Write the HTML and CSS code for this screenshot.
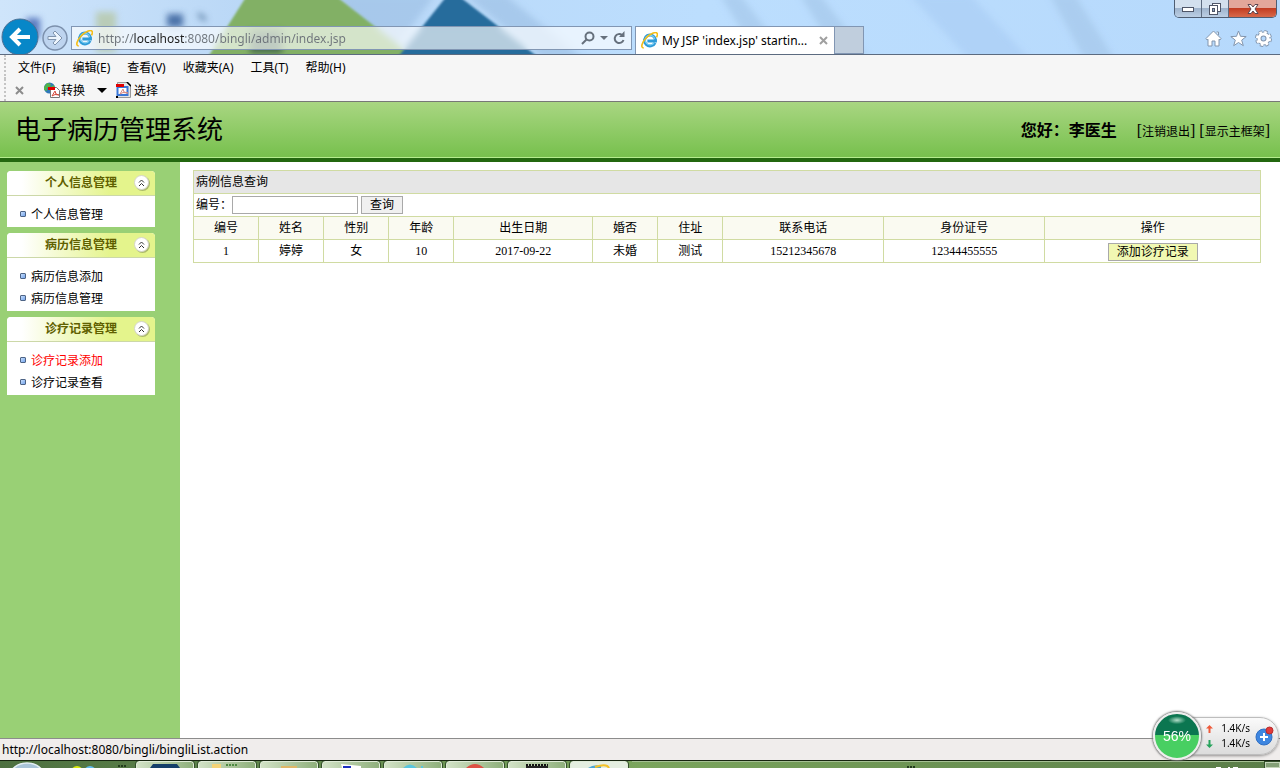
FILE: index.html
```
<!DOCTYPE html>
<html lang="zh-CN">

<head>
    <meta charset="utf-8">
    <title>My JSP 'index.jsp' starting page</title>
    <link rel="stylesheet" href="styles.css">
</head>

<body>
    <svg class="symbols" aria-hidden="true">
        <symbol id="ie" viewBox="0 0 16 16">
            <path d="M13.2 10.2a5.2 5.2 0 1 1 .4-3.2v1.4H6" fill="none" stroke="#2f9bd8" stroke-width="2.8" />
            <path d="M12.5 9.8a4.6 4.6 0 1 1 .5-3" fill="none" stroke="#7fd0f4" stroke-width="1" />
            <path d="M2.6 15C-.8 15 1 9.600 4.800 5.700 8.600 1.800 14-.8 15.200 1.300c.5 1 .1 2.400-.6 3.700" fill="none" stroke="#f5bd16" stroke-width="1.500" />
        </symbol>
        <symbol id="up" viewBox="0 0 18 18">
            <circle cx="9.500" cy="9.500" r="7.500" fill="#7d8a50" opacity=".55" />
            <circle cx="8.500" cy="8.500" r="7" fill="#fff" stroke="#d5d5c8" />
            <path d="M6 8.500l2.500-2.500 2.500 2.500M6 12l2.500-2.500 2.500 2.500" fill="none" stroke="#333" />
        </symbol>
    </svg>

    <div class="glass">
        <svg class="wallpaper" viewBox="0 0 1280 54" preserveAspectRatio="xMinYMin slice" aria-hidden="true">
            <defs>
                <filter id="soft" x="-20%" y="-50%" width="140%" height="200%">
                    <feGaussianBlur stdDeviation="3" />
                </filter>
                <filter id="edge">
                    <feGaussianBlur stdDeviation="1" />
                </filter>
                <linearGradient id="sky">
                    <stop offset="0" stop-color="#cfe5fb" />
                    <stop offset=".2" stop-color="#b9d7f6" />
                    <stop offset=".55" stop-color="#bcdefe" />
                    <stop offset="1" stop-color="#b6d9fc" />
                </linearGradient>
            </defs>
            <rect width="1280" height="54" fill="url(#sky)" />
            <g filter="url(#soft)">
                <path d="M720-5h20l50 65h-30zM800-5h20l50 65h-30zM1050-5h25l40 65h-30z" fill="#a5c8ea" opacity=".7" />
                <path d="M910-5h60l60 65h-60z" fill="#a8cbf4" opacity=".6" />
                <path d="M335-5h100l-45 60zM465-5l80 65h40l-80-65z" fill="#94b8de" opacity=".5" />
                <rect x="26" y="18" width="14" height="20" fill="#5c7bc0" />
                <rect x="96" y="12" width="20" height="40" fill="#b9ccb8" />
                <rect x="167" y="14" width="16" height="13" fill="#4c72a8" />
                <path d="M198 12l8 5v5l-8-5z" fill="#6789ad" />
            </g>
            <path d="M246-3h91l77 60H208z" fill="#82b065" filter="url(#edge)" />
            <path d="M446-3h14l78 60H398z" fill="#276c9c" filter="url(#edge)" />
            <rect x="250" y="31" width="32" height="22" fill="#44684e" filter="url(#soft)" />
        </svg>

        <div class="window-buttons">
            <button class="win" aria-label="最小化"><svg width="14" height="8" viewBox="0 0 14 8"><rect x="1.500" y="2.500" width="11" height="4" fill="#fff" stroke="#4f5668" /></svg></button>
            <button class="win" aria-label="还原"><svg width="14" height="14" viewBox="0 0 14 14" fill="#fff" stroke="#4f5668"><rect x="4.500" y="1.500" width="8" height="8" /><rect x="1.500" y="3.500" width="8" height="9" /><rect x="4.500" y="6.500" width="2" height="3" fill="#8fa5c0" /></svg></button>
            <button class="win win-close" aria-label="关闭"><svg width="14" height="12" viewBox="0 0 14 12"><path d="M2 1.500h3l2 2.500 2-2.500h3L9 6l3 4.500H9L7 8l-2 2.500H2L5 6z" fill="#fff" stroke="#5b4650" /></svg></button>
        </div>

        <div class="nav-row">
            <button class="back" aria-label="后退"><svg width="38" height="38" viewBox="0 0 38 38"><circle cx="19" cy="19" r="18" fill="#0787c8" stroke="#4c6e92" /><path d="M29 19H11M19 11l-8 8 8 8" fill="none" stroke="#fff" stroke-width="4" /></svg></button>
            <button class="forward" aria-label="前进"><svg width="26" height="26" viewBox="0 0 26 26"><circle cx="13" cy="13" r="12" fill="#b6cbe8" fill-opacity=".6" stroke="#7c90ac" stroke-width="1.500" /><path d="M6 11.500h8l-3-3.500 2-2 7 7-7 7-2-2 3-3.500H6z" fill="#edf5fd" stroke="#7f93ad" /></svg></button>
            <div class="address">
                <svg width="17" height="17"><use href="#ie" /></svg>
                <input class="url" type="text" aria-label="地址" value="http://localhost:8080/bingli/admin/index.jsp">
                <button aria-label="搜索"><svg width="14" height="14" viewBox="0 0 14 14" fill="none" stroke="#66707c" stroke-width="2"><circle cx="8.500" cy="5.500" r="4" /><path d="M5.500 8.500L1 13" /></svg></button>
                <button aria-label="下拉"><svg width="8" height="5" viewBox="0 0 8 5"><path d="M0 0h8L4 4z" fill="#66707c" /></svg></button>
                <button aria-label="刷新"><svg width="13" height="14" viewBox="0 0 13 14"><path d="M10.500 9a4.500 4.500 0 1 1-1.500-5" fill="none" stroke="#66707c" stroke-width="2" /><path d="M6 6h5.500V0z" fill="#66707c" /></svg></button>
            </div>
            <div class="tab">
                <svg width="17" height="17"><use href="#ie" /></svg>
                <span class="tab-title">My JSP 'index.jsp' startin...</span>
                <button aria-label="关闭标签"><svg width="9" height="9" viewBox="0 0 9 9"><path d="M1 1l7 7M8 1L1 8" stroke="#a0a0a0" stroke-width="2" /></svg></button>
            </div>
            <button class="new-tab" aria-label="新选项卡"></button>
            <div class="tools">
                <button aria-label="主页"><svg width="17" height="17" viewBox="0 0 17 17"><path d="M8.500 1L16 8.500l-1 1.500-1-.8V16h-4v-5H7v5H3V9.200L2 10 1 8.500zM11.500 2h2v3" fill="#fff" stroke="#8295ad" /></svg></button>
                <button aria-label="收藏夹"><svg width="17" height="17" viewBox="0 0 17 17"><path d="M8.500 1l2 5.300 5.700.3-4.500 3.500 1.600 5.600-4.800-3.200-4.800 3.200 1.600-5.600L.8 6.600l5.700-.3z" fill="#fff" stroke="#8295ad" /></svg></button>
                <button aria-label="工具"><svg width="17" height="17" viewBox="0 0 17 17"><circle cx="8.500" cy="8.500" r="6.500" fill="none" stroke="#8295ad" stroke-width="4" stroke-dasharray="3 2.100" /><circle cx="8.500" cy="8.500" r="4.500" fill="none" stroke="#8295ad" stroke-width="5" /><circle cx="8.500" cy="8.500" r="6.300" fill="none" stroke="#fff" stroke-width="2.500" stroke-dasharray="2.500 2.450" /><circle cx="8.500" cy="8.500" r="4.500" fill="none" stroke="#fff" stroke-width="3" /></svg></button>
            </div>
        </div>
    </div>

    <div class="bars">
        <div class="menubar">
            <button>文件(F)</button>
            <button>编辑(E)</button>
            <button>查看(V)</button>
            <button>收藏夹(A)</button>
            <button>工具(T)</button>
            <button>帮助(H)</button>
        </div>
        <div class="toolbar">
            <button class="bar-close" aria-label="关闭工具栏"><svg width="9" height="9" viewBox="0 0 9 9"><path d="M1 1l7 7M8 1L1 8" stroke="#8c8c8c" stroke-width="2" /></svg></button>
            <button class="tool"><svg width="17" height="16" viewBox="0 0 17 16"><circle cx="6.500" cy="6" r="5.500" fill="#2f78b8" /><path d="M1 5l3-4 4 1-1 3-3 1v3L1 8zM7 5l4-2 1 4-3 3H7z" fill="#51b34b" /><path d="M7.500 5.500h6l3 3v7h-9z" fill="#fff" stroke="#777" /><path d="M5 5h7v3H5z" fill="#e10000" /><path d="M9 14l3-5 1 3 3 1-4-.5z" fill="none" stroke="#d4493b" /></svg>转换</button>
            <button class="drop" aria-label="更多"><svg width="10" height="5" viewBox="0 0 10 5"><path d="M0 0h10L5 5z" /></svg></button>
            <button class="tool"><svg width="17" height="16" viewBox="0 0 17 16"><path d="M1.500.5h9l4 4v11h-13z" fill="#e4e4e4" stroke="#999" /><path d="M10 0l5 5V3l-3-3z" /><path d="M1.500 5h10v8h-10z" fill="#fff" stroke="#3a78d8" stroke-width="2" /><path d="M0 2h8v3H0z" fill="#e10000" /><path d="M4 12l3-5 1 3 4 1-5-.5z" fill="none" stroke="#d98a80" /><path d="M0 14h2v2H0z" /></svg>选择</button>
        </div>
    </div>

    <header class="header">
        <h1>电子病历管理系统</h1>
        <strong>您好：李医生</strong>
        <span class="links">[<a href="#">注销退出</a>] [<a href="#">显示主框架</a>]</span>
    </header>

    <div class="page">
        <nav class="sidebar">
            <section class="group">
                <h2>个人信息管理<svg width="18" height="18"><use href="#up" /></svg></h2>
                <ul>
                    <li><a href="#">个人信息管理</a></li>
                </ul>
            </section>
            <section class="group">
                <h2>病历信息管理<svg width="18" height="18"><use href="#up" /></svg></h2>
                <ul>
                    <li><a href="#">病历信息添加</a></li>
                    <li><a href="#">病历信息管理</a></li>
                </ul>
            </section>
            <section class="group">
                <h2>诊疗记录管理<svg width="18" height="18"><use href="#up" /></svg></h2>
                <ul>
                    <li><a class="current" href="#">诊疗记录添加</a></li>
                    <li><a href="#">诊疗记录查看</a></li>
                </ul>
            </section>
        </nav>

        <main class="content">
            <table class="list">
                <colgroup>
                    <col class="w6"><col class="w6"><col class="w6"><col class="w6"><col class="w13">
                    <col class="w6"><col class="w6"><col class="w15"><col class="w15"><col>
                </colgroup>
                <thead>
                    <tr class="caption">
                        <td colspan="10">病例信息查询</td>
                    </tr>
                    <tr class="search">
                        <td colspan="10">
                            <form class="search-form">
                                <label for="bianhao">编号：</label>
                                <input id="bianhao" type="text">
                                <button type="button">查询</button>
                            </form>
                        </td>
                    </tr>
                    <tr>
                        <th>编号</th>
                        <th>姓名</th>
                        <th>性别</th>
                        <th>年龄</th>
                        <th>出生日期</th>
                        <th>婚否</th>
                        <th>住址</th>
                        <th>联系电话</th>
                        <th>身份证号</th>
                        <th>操作</th>
                    </tr>
                </thead>
                <tbody>
                    <tr>
                        <td>1</td>
                        <td>婷婷</td>
                        <td>女</td>
                        <td>10</td>
                        <td>2017-09-22</td>
                        <td>未婚</td>
                        <td>测试</td>
                        <td>15212345678</td>
                        <td>12344455555</td>
                        <td><button class="add" type="button">添加诊疗记录</button></td>
                    </tr>
                </tbody>
            </table>
        </main>
    </div>

    <footer class="status">http://localhost:8080/bingli/bingliList.action</footer>

    <div class="taskbar">
        <div class="start"><svg width="132" height="8" viewBox="0 0 132 8"><ellipse cx="27" cy="15" rx="17" ry="13" fill="#a9c4d8" stroke="#e3eef3" stroke-width="1.500" /><circle cx="77" cy="11" r="6" fill="#d9ea0c" /><circle cx="90" cy="11" r="6" fill="#62bdf0" /><path d="M118 5h9" stroke="#223c1c" stroke-width="2" stroke-dasharray="2 1" /></svg></div>
        <button class="task" aria-label="任务 1"><svg width="30" height="4" viewBox="0 0 30 4"><path d="M0 4l3-4h24l3 4z" fill="#153f6a" /></svg></button>
        <button class="task" aria-label="任务 2"><svg width="30" height="4" viewBox="0 0 30 4"><path d="M0 0h9v4H0z" fill="#f5d477" /><path d="M14 1h12" stroke="#4c8a41" stroke-width="2" stroke-dasharray="2 1" /></svg></button>
        <button class="task" aria-label="任务 3"><svg width="16" height="4" viewBox="0 0 16 4"><path d="M0 2h16v2H0z" fill="#dfb768" /></svg></button>
        <button class="task" aria-label="任务 4"><svg width="20" height="4" viewBox="0 0 20 4"><path d="M0 0l20 2v2H1z" fill="#fff" /><path d="M2 2h8v2H2z" fill="#1b2fbe" /></svg></button>
        <button class="task" aria-label="任务 5"><svg width="20" height="4" viewBox="0 0 20 4"><path d="M0 4q7-7 14 0zM18 2h2v2h-2z" fill="#58c6df" /></svg></button>
        <button class="task" aria-label="任务 6"><svg width="18" height="4" viewBox="0 0 18 4"><path d="M0 4q9-8 18 0z" fill="#dd5144" /></svg></button>
        <button class="task" aria-label="任务 7"><svg width="22" height="4" viewBox="0 0 22 4"><path d="M0 1h22" stroke="#111" stroke-width="2" stroke-dasharray="2 1" /><path d="M0 2h22v2H0z" fill="#222" /></svg></button>
        <button class="task active" aria-label="任务 8"><svg width="24" height="4" viewBox="0 0 24 4"><path d="M1 4q6-4 13-2v2z" fill="#4aa5d5" /><path d="M8 3q12-4 14 1" fill="none" stroke="#f5c226" stroke-width="2" /></svg></button>
        <div class="tray">
            <svg width="340" height="7" viewBox="0 0 340 7"><path d="M0 5h9" stroke="#223c1c" stroke-width="2" stroke-dasharray="2 1" /><path d="M309 6h5M321 6h2M326 6h5" stroke="#fff" stroke-width="2" /></svg>
            <button class="desktop" aria-label="显示桌面"></button>
        </div>
    </div>

    <div class="netball">
        <div class="speeds">
            <span><svg width="7" height="8" viewBox="0 0 7 8"><path d="M3.500 0L7 3.500H4.500V8h-2V3.500H0z" fill="#ee5a3a" /></svg>1.4K/s</span>
            <span><svg width="7" height="8" viewBox="0 0 7 8"><path d="M3.500 8L7 4.500H4.500V0h-2v4.500H0z" fill="#27a35c" /></svg>1.4K/s</span>
        </div>
        <svg width="19" height="20" viewBox="0 0 19 20"><circle cx="9" cy="11" r="8" fill="#3e86e0" stroke="#2f6fc4" /><path d="M9 7v8M5 11h8" stroke="#fff" stroke-width="2" /><circle cx="14.500" cy="4.500" r="3.500" fill="#e23b3b" stroke="#b52d2d" /></svg>
        <div class="ball">56%</div>
    </div>
</body>

</html>
```
FILE: styles.css
```
* {
    box-sizing: border-box;
}

body {
    margin: 0;
    height: 100vh;
    display: flex;
    flex-direction: column;
    overflow: hidden;
    background: white;
    color: black;
    font-family: "Liberation Serif", "Noto Sans CJK SC", serif;
    font-size: 12px;
}

button {
    margin: 0;
    padding: 0;
    border: 0;
    background: none;
    font: inherit;
    color: inherit;
}

svg {
    display: block;
    flex: none;
}

a {
    color: inherit;
    text-decoration: none;
}

.symbols {
    position: absolute;
    width: 0;
    height: 0;
}

/* browser window */
.glass {
    position: relative;
    flex: none;
    height: 55px;
    overflow: hidden;
    border-bottom: 1px solid #5c6b80;
    font-family: "Noto Sans", "Noto Sans CJK SC", sans-serif;
}

.wallpaper {
    position: absolute;
    left: 0;
    top: 0;
    width: 100%;
    height: 100%;
}

.window-buttons {
    position: absolute;
    right: 3px;
    top: 0;
    display: flex;
    height: 18px;
    border: 1px solid #4e5d72;
    border-top: 0;
    border-radius: 0 0 5px 5px;
    overflow: hidden;
}

.win {
    display: flex;
    align-items: center;
    justify-content: center;
    width: 27px;
    border-right: 1px solid #5c6b80;
    background: linear-gradient(#d3e0ee 45%, #9fb4cd 50%, #bccfe4);
}

.win-close {
    width: 47px;
    border-right: 0;
    background: linear-gradient(#e3a79a 45%, #c23d22 50%, #d8694a);
}

.nav-row {
    position: relative;
    display: flex;
    align-items: flex-start;
    padding: 18px 8px 0 1px;
}

.forward {
    margin: 7px 3px 0;
}

.address {
    flex: none;
    display: flex;
    align-items: center;
    gap: 5px;
    width: 561px;
    height: 24px;
    margin: 8px 3px 0 0;
    padding: 0 5px 0 4px;
    border: 1px solid #8196b3;
    background: rgba(255, 255, 255, 0.66);
    backdrop-filter: blur(3px);
}

.url {
    flex: 1;
    min-width: 0;
    padding: 0;
    border: 0;
    outline: 0;
    font: 12px "Noto Sans", sans-serif;
    /* the host name is darker than the rest */
    background: linear-gradient(90deg, #6e747b 36px, #1c1c1c 36px, #1c1c1c 87px, #6e747b 87px);
    -webkit-background-clip: text;
    background-clip: text;
    color: transparent;
}

.tab {
    flex: none;
    display: flex;
    align-items: center;
    gap: 4px;
    width: 200px;
    height: 28px;
    margin-top: 8px;
    padding: 0 6px 0 5px;
    border: 1px solid #8196b3;
    border-bottom: 0;
    background: white;
}

.tab-title {
    flex: 1;
    font-size: 12px;
    white-space: nowrap;
}

.new-tab {
    width: 29px;
    height: 28px;
    margin-top: 8px;
    border: 1px solid #8196b3;
    border-left: 0;
    background: #c0cedd;
}

.tools {
    display: flex;
    gap: 8px;
    margin: 12px 0 0 auto;
}

.bars {
    flex: none;
    background: #f6f6f6;
    border-bottom: 1px solid #777;
    font-family: "Noto Sans", "Noto Sans CJK SC", sans-serif;
}

.menubar,
.toolbar {
    display: flex;
    align-items: center;
    height: 24px;
    margin-left: 4px;
    border-left: 2px dotted #c4c4c4;
}

.menubar {
    gap: 17px;
    padding-left: 12px;
}

.toolbar {
    height: 22px;
    padding-left: 9px;
}

.tool {
    display: flex;
    align-items: center;
    gap: 1px;
}

.bar-close {
    margin-right: 19px;
}

.drop {
    margin: 0 9px 0 12px;
}

/* page header */
.header {
    flex: none;
    display: flex;
    align-items: center;
    height: 60px;
    padding: 2px 10px 0 15px;
    border-bottom: 4px solid #23670f;
    background: linear-gradient(#a9d682, #76c04c);
    box-shadow: inset 0 -1px #b5ec8e;
    line-height: 24px;
}

.header h1 {
    flex: 1;
    margin: 0;
    font-size: 26px;
    font-weight: 400;
}

.header strong {
    margin-right: 20px;
    font-size: 16px;
}

.links {
    font-size: 16px;
}

.links a {
    font-size: 12px;
}

.page {
    flex: 1;
    display: flex;
    min-height: 0;
}

/* left menu */
.sidebar {
    flex: none;
    display: flex;
    flex-direction: column;
    gap: 6px;
    width: 180px;
    padding: 9px 25px 0 7px;
    background: #99d075;
}

.group {
    background: white;
    border-radius: 4px 4px 0 0;
}

.group h2 {
    display: flex;
    align-items: center;
    justify-content: flex-end;
    gap: 16px;
    height: 25px;
    margin: 0;
    padding-right: 4px;
    border-bottom: 1px solid #ccd8a8;
    border-radius: 4px 4px 0 0;
    background: linear-gradient(90deg, #fff 10%, #e4f48c 70%);
    color: #5f6000;
    font-size: 12px;
    line-height: 22px;
}

.group ul {
    margin: 0;
    padding: 7px 0 2px 13px;
    list-style: none;
}

.group li {
    display: flex;
    align-items: center;
    gap: 5px;
    height: 22px;
}

.group li::before {
    content: "";
    width: 6px;
    height: 6px;
    box-sizing: border-box;
    border: 1px solid #4d6486;
    border-radius: 1px;
    background: linear-gradient(135deg, #c5ddfb, #76a5ec);
}

.current {
    color: #ff0000;
}

/* records */
.content {
    flex: 1;
    min-width: 0;
    padding: 8px 19px 0 13px;
}

.list {
    width: 100%;
    table-layout: fixed;
    border-collapse: collapse;
    border: 1px solid #d0dba2;
}

.list td,
.list th {
    height: 23px;
    padding: 0 2px;
    border: 1px solid #d0dba2;
    line-height: 18px;
    font-weight: 400;
    text-align: center;
}

.list th {
    background: #fafaf1;
}

.list .caption td {
    background: #e6e6e6;
    text-align: left;
}

.w6 {
    width: 6.1%;
}

.w13 {
    width: 13%;
}

.w15 {
    width: 15.1%;
}

.search-form {
    display: flex;
    align-items: center;
}

.search-form input {
    width: 126px;
    height: 18px;
    margin: 0 3px 0 0;
    border: 1px solid #a9a9a9;
}

.search-form button {
    width: 42px;
    height: 18px;
    border: 1px solid #a9a9a9;
    background: #f0f0f0;
    line-height: 16px;
}

.add {
    width: 90px;
    height: 18px;
    border: 1px solid #a9a9a9;
    background: #f1f8b2;
    line-height: 16px;
    vertical-align: middle;
}

/* bottom of the window */
.status {
    flex: none;
    height: 22px;
    padding-left: 2px;
    border-top: 1px solid #8c8c8c;
    background: #f0edec;
    font: 12px "Noto Sans", sans-serif;
    line-height: 21px;
}

.taskbar {
    flex: none;
    display: flex;
    gap: 4px;
    height: 8px;
    overflow: hidden;
    border-top: 1px solid #16240f;
    background: linear-gradient(90deg, #4d7040, #7ba55d 50%, #5a7d48);
}

.start {
    width: 132px;
}

.task {
    display: flex;
    justify-content: center;
    align-items: flex-end;
    width: 58px;
    height: 7px;
    border: 1px solid #e0ecd8;
    border-bottom: 0;
    border-radius: 3px 3px 0 0;
    outline: 1px solid #33502a;
    background: linear-gradient(90deg, #d2e2c6, #8fb07c);
}

.active {
    background: #e4eee0;
}

.tray {
    flex: 1;
    display: flex;
    justify-content: flex-end;
    gap: 18px;
    border-top: 1px solid #a5c093;
}

.desktop {
    width: 15px;
    border: 1px solid #c5d6ba;
    outline: 1px solid #33502a;
    background: #84a077;
}

/* floating speed meter */
.netball {
    position: fixed;
    right: 1px;
    bottom: 13px;
    display: flex;
    align-items: center;
    gap: 5px;
    width: 102px;
    height: 38px;
    padding: 0 4px 0 28px;
    border: 1px solid #bdbdbd;
    border-radius: 0 19px 19px 0;
    background: linear-gradient(#fafafa, #dcdcdc);
    box-shadow: 0 1px 3px rgba(0, 0, 0, 0.4);
    font: 10px "Noto Sans", sans-serif;
}

.speeds {
    display: flex;
    flex: 1;
    flex-direction: column;
    line-height: 15px;
}

.speeds span {
    display: flex;
    align-items: center;
    justify-content: space-between;
}

.ball {
    position: absolute;
    left: -25px;
    top: -6px;
    width: 48px;
    height: 48px;
    border: 2px solid #eee;
    border-radius: 50%;
    box-shadow: 0 0 2px 1px #777;
    background: radial-gradient(9px 4px at 50% 14%, #b5dfcb, transparent), linear-gradient(#0b7650 48%, #48cf62 48%);
    color: white;
    font: 14px "Liberation Sans", sans-serif;
    line-height: 44px;
    text-align: center;
}
```
